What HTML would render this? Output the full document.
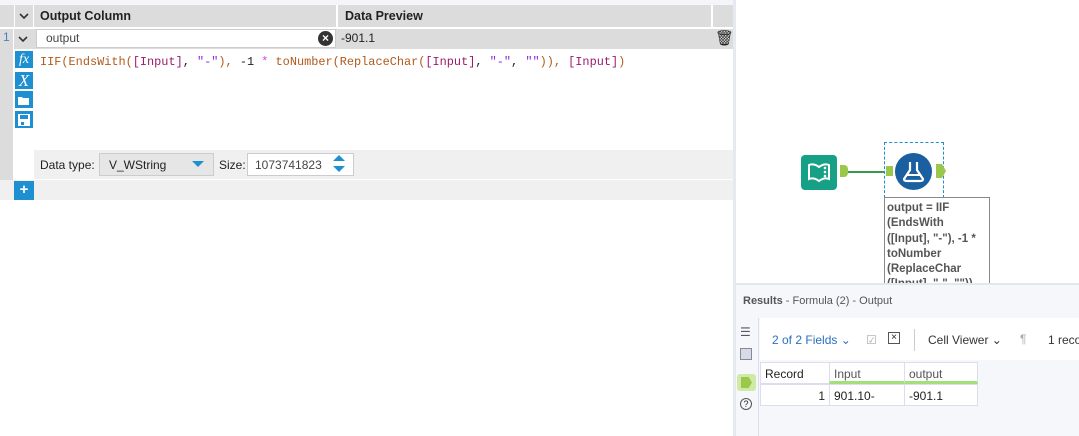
<!DOCTYPE html><html><head><style>
body{margin:0;width:1079px;height:436px;position:relative;overflow:hidden;background:#fff;font-family:"Liberation Sans",sans-serif;font-size:12px;color:#222}
div{position:absolute;box-sizing:border-box;white-space:nowrap}
.mono{font-family:"Liberation Mono",monospace;font-size:11.9px}
.ib{background:#1e8fd0;width:18px;height:17px;color:#fff;text-align:center;font-style:italic;font-family:"Liberation Serif",serif;font-size:14px;line-height:17px}
</style></head><body>
<div style="left:0;top:0;width:733px;height:5px;background:#f3f5f9"></div>
<div style="left:0;top:5px;width:733px;height:22px;background:#dcdcdc"></div>
<div style="left:0;top:5px;width:13px;height:195px;background:#dcdcdc"></div>
<div style="left:14px;top:5px;width:20px;height:22px;border-left:1px solid #fff;border-right:1px solid #fff"><svg width="18" height="22"><path d="M5 9l4 4 4-4" stroke="#333" stroke-width="1.6" fill="none"/></svg></div>
<div style="left:40px;top:9px;font-weight:bold;font-size:12.5px">Output Column</div>
<div style="left:336px;top:5px;width:2px;height:22px;background:#fff"></div>
<div style="left:345px;top:9px;font-weight:bold;font-size:12.5px">Data Preview</div>
<div style="left:711px;top:5px;width:2px;height:22px;background:#fff"></div>
<div style="left:0;top:27px;width:733px;height:2px;background:#fff"></div>
<div style="left:14px;top:29px;width:719px;height:20px;background:#dcdcdc"></div>
<div style="left:3px;top:30px;color:#4a7fc0;font-size:12px">1</div>
<div style="left:14px;top:29px;width:20px;height:20px"><svg width="18" height="20"><path d="M5 8l4 4 4-4" stroke="#333" stroke-width="1.6" fill="none"/></svg></div>
<div style="left:36px;top:29px;width:300px;height:19px;background:#fff;border:1px solid #ccc"></div>
<div style="left:46px;top:31px;color:#444">output</div>
<div style="left:318px;top:31px;width:15px;height:15px;border-radius:50%;background:#333;color:#fff;font-size:12px;line-height:15px;text-align:center;font-weight:bold">×</div>
<div style="left:341px;top:31px">-901.1</div>
<div style="left:715px;top:29px;font-size:15px">🗑</div>
<div style="left:14px;top:49px;width:20px;height:131px;background:#fff"></div>
<div class="ib" style="left:15px;top:51px">fx</div>
<div class="ib" style="left:15px;top:72px;font-size:17px">X</div>
<div class="ib" style="left:15px;top:91px;font-style:normal"><svg width="14" height="14" style="margin-top:2px"><path d="M1 4h4l1 1h6v7H1z" fill="#fff"/></svg></div>
<div class="ib" style="left:15px;top:111px;font-style:normal"><svg width="14" height="14" style="margin-top:2px"><rect x="1" y="1" width="12" height="12" fill="#fff"/><rect x="3" y="2" width="8" height="4" fill="#1e8fd0"/><rect x="4" y="9" width="3" height="3" fill="#1e8fd0"/></svg></div>
<div class="mono" style="left:40px;top:55px;white-space:pre;color:#b05a1a">IIF(EndsWith(<span style="color:#9b1c6c">[Input]</span><span style="color:#222">, </span><span style="color:#8a2be2">"-"</span>), <span style="color:#222">-1</span> <span style="color:#e040e0">*</span> toNumber(ReplaceChar(<span style="color:#9b1c6c">[Input]</span><span style="color:#222">, </span><span style="color:#8a2be2">"-"</span><span style="color:#222">, </span><span style="color:#8a2be2">""</span>)), <span style="color:#9b1c6c">[Input]</span>)</div>
<div style="left:34px;top:150px;width:699px;height:29px;background:#f0f0f0"></div>
<div style="left:40px;top:158px">Data type:</div>
<div style="left:99px;top:153px;width:115px;height:23px;background:#e6e6e6;border:1px solid #ccc"></div>
<div style="left:109px;top:158px">V_WString</div>
<div style="left:192px;top:161px;width:0;height:0;border-left:6px solid transparent;border-right:6px solid transparent;border-top:6px solid #1e8fd0"></div>
<div style="left:219px;top:158px">Size:</div>
<div style="left:247px;top:153px;width:107px;height:23px;background:#fff;border:1px solid #ccc"></div>
<div style="left:255px;top:158px;color:#444">1073741823</div>
<div style="left:333px;top:155px;width:0;height:0;border-left:6px solid transparent;border-right:6px solid transparent;border-bottom:6px solid #1e8fd0"></div>
<div style="left:333px;top:166px;width:0;height:0;border-left:6px solid transparent;border-right:6px solid transparent;border-top:6px solid #1e8fd0"></div>
<div style="left:0;top:180px;width:733px;height:20px;background:#f0f0f0"></div>
<div style="left:14px;top:181px;width:20px;height:19px;background:#1e8fd0;color:#fff;text-align:center;font-weight:bold;font-size:15px;line-height:18px">+</div>
<div style="left:733px;top:0;width:3px;height:436px;background:#e6e9ef"></div>
<div style="left:801px;top:155px;width:36px;height:35px;background:#16a085;border-radius:4px"><svg width="36" height="35"><path d="M8 10q5-2 10 2q5-4 10-2v14q-5-2-10 2q-5-4-10-2z" fill="none" stroke="#fff" stroke-width="2"/><circle cx="24" cy="13" r="1.3" fill="#fff"/><circle cx="24" cy="17" r="1.3" fill="#fff"/><circle cx="24" cy="21" r="1.3" fill="#fff"/></svg></div>
<div style="left:840px;top:165px;width:8px;height:12px;background:#9bc84a;border-radius:0 4px 4px 0"></div>
<div style="left:848px;top:171px;width:37px;height:2px;background:#3a9a4a"></div>
<div style="left:884px;top:142px;width:60px;height:56px;border:1px dashed #1e8fd0"></div>
<div style="left:886px;top:166px;width:7px;height:10px;background:#9bc84a"></div>
<div style="left:895px;top:153px;width:37px;height:37px;border-radius:50%;background:#1a5fa0"><svg width="37" height="37"><path d="M15 9v8l-6 9q0 2 3 2h13q3 0 3-2l-6-9V9" fill="none" stroke="#fff" stroke-width="2.2"/><path d="M12 22h13" stroke="#fff" stroke-width="2"/></svg></div>
<div style="left:936px;top:164px;width:10px;height:14px;background:#9bc84a;clip-path:polygon(0 0,60% 0,100% 50%,60% 100%,0 100%)"></div>
<div style="left:884px;top:197px;width:106px;height:90px;border:1px solid #888;background:#fff;padding:3px 2px;font-weight:bold;color:#555;font-size:11.5px;line-height:15.3px;white-space:normal">output = IIF (EndsWith ([Input], "-"), -1 * toNumber (ReplaceChar ([Input], "-", ""))</div>
<div style="left:736px;top:283px;width:343px;height:153px;background:#f5f7fb;border-top:2px solid #e2e6ee"></div>
<div style="left:743px;top:295px;font-size:11px;color:#555"><b>Results</b> - Formula (2) - Output</div>
<div style="left:736px;top:318px;width:23px;height:118px;border-right:1px solid #dde"></div>
<div style="left:740px;top:325px;color:#556;font-size:12px">☰</div>
<div style="left:740px;top:348px;width:12px;height:12px;background:#d7dbe6;border:1px solid #889"></div>
<div style="left:737px;top:374px;width:19px;height:17px;background:#cfeaa6;border-radius:3px"></div>
<div style="left:741px;top:377px;width:11px;height:11px;background:#9bc84a;clip-path:polygon(0 0,70% 0,100% 50%,70% 100%,0 100%)"></div>
<div style="left:740px;top:398px;width:12px;height:12px;border:1px solid #555;border-radius:50%;font-size:9px;text-align:center;line-height:11px">?</div>
<div style="left:760px;top:318px;width:319px;height:42px;background:#fff"></div>
<div style="left:772px;top:333px;color:#2a70c0">2 of 2 Fields ⌄</div>
<div style="left:866px;top:333px;color:#aaa">☑</div>
<div style="left:888px;top:332px;width:12px;height:12px;border:1.5px solid #555;font-size:10px;text-align:center;line-height:10px">×</div>
<div style="left:914px;top:329px;width:1px;height:22px;background:#ccc"></div>
<div style="left:928px;top:333px;color:#333">Cell Viewer ⌄</div>
<div style="left:1020px;top:332px;color:#aaa">¶</div>
<div style="left:1048px;top:333px;color:#333">1 reco</div>
<div style="left:760px;top:362px;width:218px;height:44px;background:#fff"></div>
<div style="left:760px;top:362px;width:70px;height:22px;border:1px solid #dde;padding:4px">Record</div>
<div style="left:829px;top:362px;width:76px;height:22px;border:1px solid #dde;border-bottom:3px solid #a4e07a;padding:4px;color:#555">Input</div>
<div style="left:904px;top:362px;width:74px;height:22px;border:1px solid #dde;border-bottom:3px solid #a4e07a;padding:4px;color:#555">output</div>
<div style="left:760px;top:384px;width:70px;height:22px;border:1px solid #dde;padding:4px;text-align:right">1</div>
<div style="left:829px;top:384px;width:76px;height:22px;border:1px solid #dde;padding:4px">901.10-</div>
<div style="left:904px;top:384px;width:74px;height:22px;border:1px solid #dde;padding:4px">-901.1</div>
</body></html>
